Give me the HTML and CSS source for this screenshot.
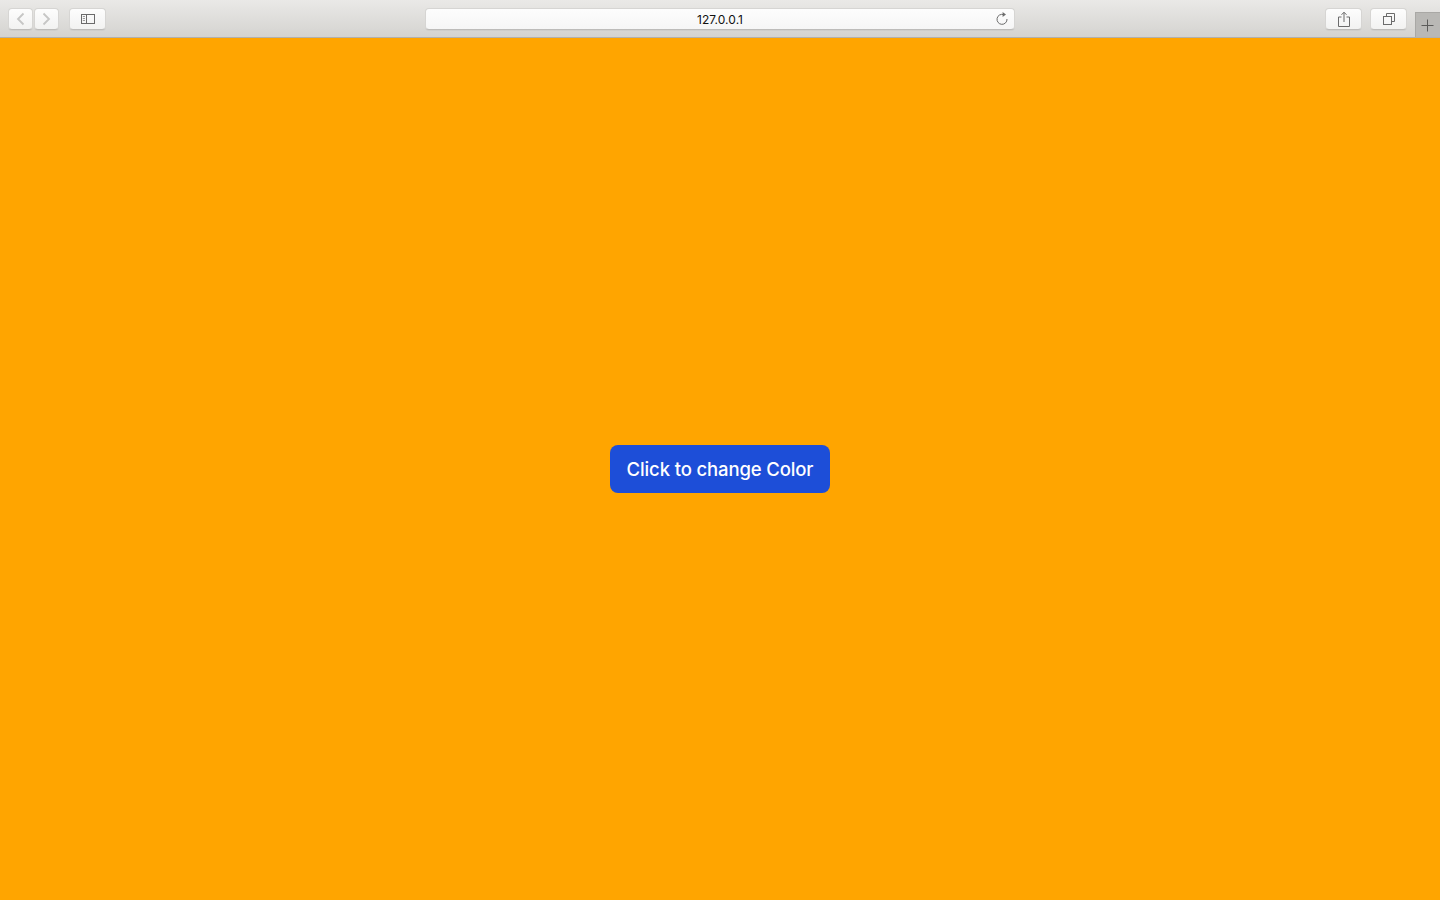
FILE: index.html
```html
<!DOCTYPE html>
<html lang="en">
<head>
<meta charset="utf-8">
<title>127.0.0.1</title>
<link rel="stylesheet" href="styles.css">
</head>
<body>
<header class="toolbar">
  <div class="group-left">
    <div class="nav-pair">
      <div class="tool nav"><svg width="23" height="20" viewBox="0 0 23 20"><path class="dim" d="M14.5 4.5 L9 10 L14.5 15.5"/></svg></div>
      <div class="tool nav"><svg width="23" height="20" viewBox="0 0 23 20"><path class="dim" d="M8.5 4.5 L14 10 L8.5 15.5"/></svg></div>
    </div>
    <div class="tool wide"><svg width="16" height="12" viewBox="0 0 16 12"><rect class="ico" x="1.5" y="1.5" width="13" height="9"/><path class="ico" d="M6.5 1.5 V10.5"/><path class="thin" d="M2.8 3.5 H5 M2.8 5.5 H5 M2.8 7.5 H5"/></svg></div>
  </div>
  <div class="address">
    <span class="url">127.0.0.1</span>
    <svg class="reload" width="14" height="14" viewBox="0 0 14 14"><path class="ico" d="M8.6 2.6 A5 5 0 1 0 12 7"/><path class="solid" d="M7.6 0 L11 2.5 L7.6 5 Z"/></svg>
  </div>
  <div class="group-right">
    <div class="tool wide"><svg width="14" height="17" viewBox="0 0 14 17"><path class="ico" d="M4.5 6 H1.5 V15.5 H12.5 V6 H9.5"/><path class="ico" d="M7 11 V1.5 M4.5 3.8 L7 1.2 L9.5 3.8"/></svg></div>
    <div class="tool wide"><svg width="14" height="14" viewBox="0 0 14 14"><rect class="ico" x="1.5" y="4.5" width="8" height="8"/><path class="ico" d="M4.5 4.5 V1.5 H12.5 V9.5 H9.5"/></svg></div>
    <div class="new-tab"><svg width="13" height="13" viewBox="0 0 13 13"><path class="plus" d="M6.5 0.5 V12.5 M0.5 6.5 H12.5"/></svg></div>
  </div>
</header>
<main class="page">
  <button class="cta" type="button">Click to change Color</button>
</main>
</body>
</html>
```
FILE: styles.css
```css
* { box-sizing: border-box; }
html, body { margin: 0; height: 100%; }
body {
  display: flex;
  flex-direction: column;
  height: 900px;
  overflow: hidden;
  font-family: Inter, "Liberation Sans", sans-serif;
}
.toolbar {
  position: relative;
  flex: 0 0 38px;
  height: 38px;
  display: flex;
  align-items: flex-start;
  justify-content: space-between;
  padding: 8px 0 0 8px;
  background: linear-gradient(#eae9e7, #d4d3d0);
  border-bottom: 1px solid #b1b0ae;
}
.group-left, .group-right, .nav-pair { display: flex; }
.group-left { gap: 10px; }
.nav-pair { gap: 1px; }
.group-right { gap: 8px; }
.tool {
  height: 22px;
  display: flex;
  align-items: center;
  justify-content: center;
  background: linear-gradient(#fdfdfd, #f2f2f1);
  border: 1px solid #d6d5d3;
  border-bottom-color: #bdbcba;
  border-radius: 4px;
  box-shadow: 0 1px 0 rgba(0, 0, 0, 0.04);
}
.nav { width: 25px; }
.wide { width: 37px; }
.address {
  position: absolute;
  left: 425px;
  top: 8px;
  width: 590px;
  height: 22px;
  display: flex;
  align-items: center;
  justify-content: center;
  background: linear-gradient(#fdfdfd, #f6f6f6);
  border: 1px solid #d6d5d3;
  border-bottom-color: #bdbcba;
  border-radius: 4px;
  box-shadow: 0 1px 0 rgba(0, 0, 0, 0.04);
}
.url {
  padding-top: 1px;
  font-size: 12px;
  line-height: 20px;
  color: #111;
  letter-spacing: 0.05px;
}
.reload { position: absolute; right: 5px; top: 3px; }
.new-tab {
  width: 25px;
  height: 25px;
  margin-top: 4px;
  padding-right: 1px;
  display: flex;
  align-items: center;
  justify-content: center;
  background: #b9b8b5;
  border: 1px solid #a9a8a5;
  border-bottom: 0;
  border-right: 0;
}
svg { display: block; fill: none; }
.dim { stroke: #c6c6c5; stroke-width: 1.8; }
.ico { stroke: #6b6b6b; stroke-width: 1; fill: none; }
.thin { stroke: #9a9a9a; stroke-width: 1; }
.solid { fill: #6b6b6b; }
.plus { stroke: #5c5c5a; stroke-width: 1; }
.page {
  flex: 1;
  display: flex;
  align-items: center;
  justify-content: center;
  background: #ffa500;
}
.cta {
  width: 220px;
  height: 48px;
  padding: 0;
  background: #1d4ed8;
  color: #fff;
  border: 0;
  border-radius: 8px;
  font-family: Inter, "Liberation Sans", sans-serif;
  font-size: 18.5px;
  font-weight: 500;
  letter-spacing: -0.13px;
  line-height: 28px;
}
```
